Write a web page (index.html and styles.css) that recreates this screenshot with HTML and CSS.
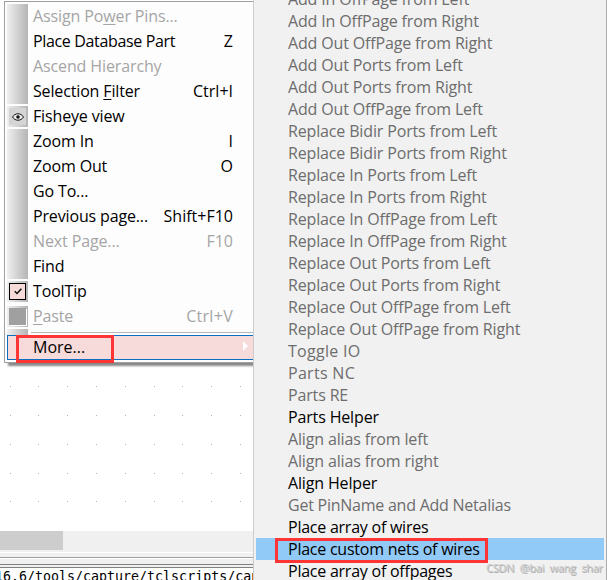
FILE: index.html
```html
<!DOCTYPE html>
<html lang="en">
<head>
<meta charset="utf-8">
<title>Schematic context menu</title>
<link rel="stylesheet" href="styles.css">
</head>
<body>
<div class="app">
  <main class="workspace">
    <div class="canvas">
      <svg class="grid" width="253" height="531" fill="#b4b4b4">
        <defs><path id="dots" d="M10 0h1v1h-1zM38 0h1v1h-1zM67 0h1v1h-1zM96 0h1v1h-1zM125 0h1v1h-1zM154 0h1v1h-1zM182 0h1v1h-1zM211 0h1v1h-1zM240 0h1v1h-1z"/></defs>
        <use href="#dots" y="386"/><use href="#dots" y="415"/><use href="#dots" y="444"/><use href="#dots" y="473"/><use href="#dots" y="501"/>
      </svg>
    </div>
    <div class="scrollbar"><div class="thumb"></div></div>
    <div class="splitter"></div>
    <div class="console"><span>16.6/tools/capture/tclscripts/cap</span></div>
    <nav class="menu">
      <div class="row off"><i class="gut"></i><span class="lbl">Assign Po<u>w</u>er Pins...</span></div>
      <div class="row"><i class="gut"></i><span class="lbl tight">Place Database Part</span><span class="key">Z</span></div>
      <div class="row off"><i class="gut"></i><span class="lbl">Ascend Hierarchy</span></div>
      <div class="row"><i class="gut"></i><span class="lbl">Selection <u>F</u>ilter</span><span class="key">Ctrl+I</span></div>
      <div class="row"><i class="gut mark"><b class="eye"><svg width="12" height="8" viewBox="0 0 12 8"><path d="M.5 4C3-.3 9-.3 11.5 4C9 8.300 3 8.300.5 4z" fill="#eee" stroke="#111"/><circle cx="6" cy="4" r="1.800" fill="#111"/></svg></b></i><span class="lbl">Fisheye view</span></div>
      <div class="row"><i class="gut"></i><span class="lbl">Zoom In</span><span class="key">I</span></div>
      <div class="row"><i class="gut"></i><span class="lbl">Zoom Out</span><span class="key">O</span></div>
      <div class="row"><i class="gut"></i><span class="lbl">Go To...</span></div>
      <div class="row"><i class="gut"></i><span class="lbl">Previous page...</span><span class="key">Shift+F10</span></div>
      <div class="row off"><i class="gut"></i><span class="lbl">Next Page...</span><span class="key">F10</span></div>
      <div class="row"><i class="gut"></i><span class="lbl">Find</span></div>
      <div class="row"><i class="gut mark"><b class="check"><svg width="8" height="7" viewBox="0 0 8 7"><path d="M.7 3.300L3 5.500L7.400.8" fill="none" stroke="#111" stroke-width="1.500"/></svg></b></i><span class="lbl">ToolTip</span></div>
      <div class="row off"><i class="gut mark"><b class="blank"></b></i><span class="lbl"><u>P</u>aste</span><span class="key wide">Ctrl+V</span></div>
      <div class="sep"><i class="gut"></i><hr></div>
      <div class="more"><span class="lbl">More...</span><svg width="5" height="10" viewBox="0 0 5 10"><path d="M0 0L5 5L0 10z" fill="#fff"/></svg></div>
    </nav>
    <div class="callout more-box"></div>
  </main>
  <aside class="submenu">
    <ul>
      <li class="off">Add In OffPage from Left</li>
      <li class="off">Add In OffPage from Right</li>
      <li class="off">Add Out OffPage from Right</li>
      <li class="off">Add Out Ports from Left</li>
      <li class="off">Add Out Ports from Right</li>
      <li class="off">Add Out OffPage from Left</li>
      <li class="off">Replace Bidir Ports from Left</li>
      <li class="off">Replace Bidir Ports from Right</li>
      <li class="off">Replace In Ports from Left</li>
      <li class="off">Replace In Ports from Right</li>
      <li class="off">Replace In OffPage from Left</li>
      <li class="off">Replace In OffPage from Right</li>
      <li class="off">Replace Out Ports from Left</li>
      <li class="off">Replace Out Ports from Right</li>
      <li class="off">Replace Out OffPage from Left</li>
      <li class="off">Replace Out OffPage from Right</li>
      <li class="off wide">Toggle IO</li>
      <li class="off wide">Parts NC</li>
      <li class="off">Parts RE</li>
      <li>Parts Helper</li>
      <li class="off">Align alias from left</li>
      <li class="off">Align alias from right</li>
      <li>Align Helper</li>
      <li class="off tail">Get PinName and Add Netalias</li>
      <li class="tail">Place array of wires</li>
      <li class="sel tail">Place custom nets of wires</li>
      <li class="tail">Place array of offpages</li>
    </ul>
    <div class="callout nets-box"></div>
    <div class="watermark">CSDN @bai wang shar</div>
  </aside>
</div>
</body>
</html>
```
FILE: styles.css
```css
* { box-sizing: border-box; }
body { margin: 0; }
.app {
  display: grid;
  grid-template-columns: 253px 354px;
  width: 607px;
  height: 580px;
  overflow: hidden;
  font: 16px/22px "Open Sans", "Noto Sans", sans-serif;
  letter-spacing: -0.15px;
  color: #000;
  font-variant-ligatures: none;
}
.workspace { position: relative; display: flex; flex-direction: column; overflow: hidden; background: #f0f0f0; }
.canvas { height: 531px; background: #fff; }
.grid { display: block; }
.scrollbar { height: 21px; background: #f0f0f0; }
.thumb { width: 63px; height: 19px; background: #cdcdcd; }
.splitter { height: 15px; border-top: 1px solid #fff; background: linear-gradient(#f0f0f0 4px, #a0a0a0 4px, #a0a0a0 5px, #fff 5px, #fff 6px, #f0f0f0 6px, #f0f0f0 11px, #808080 11px, #808080 12px, #f0f0f0 12px); }
.console { flex: 1; overflow: hidden; border-top: 1px solid #808080; background: #fff; font: 13.3px/16px "DejaVu Sans Mono", monospace; letter-spacing: 0; white-space: nowrap; }
.console span { display: block; margin: 1px 0 0 -5px; }

.menu { position: absolute; left: 4px; top: 1px; width: 260px; height: 362px; padding: 2px; border: 1px solid #a0a0a0; background: #fdfdfd; box-shadow: 4px 3px 2px #888; }
.row { display: flex; align-items: center; height: 25px; }
.gut { display: flex; align-items: center; justify-content: center; flex: none; width: 21px; height: 100%; background: linear-gradient(90deg, #efefef, #b5b5b5); }
.mark { height: 21px; }
.lbl { margin: 0 0 1px 5px; white-space: nowrap; }
.tight { letter-spacing: -0.35px; }
.key { margin: 0 28px 1px auto; letter-spacing: 0; white-space: nowrap; }
.wide { letter-spacing: 0.3px; }
.row.off { color: #a5a5a5; }
.row.off .lbl { letter-spacing: -0.12px; }
u { text-underline-offset: 2px; text-decoration-thickness: 1px; text-decoration-skip-ink: none; }
.eye, .check, .blank { display: flex; align-items: center; justify-content: center; width: 17px; height: 17px; }
.eye { background: #d5d5d5; }
.check { border: 1px solid #000; background: #f7dada; }
.blank { background: #a0a0a0; box-shadow: 1px 1px #fff; }
.sep { display: flex; align-items: center; height: 6px; }
.sep hr { flex: 1; height: 1px; margin: 0 0 0 3px; border: 0; background: #b4b8bb; }
.more { display: flex; align-items: center; height: 25px; border: 1px solid #0a6fc2; background: #f7dada; }
.more .lbl { margin-left: 25px; letter-spacing: 0; }
.more svg { margin: 0 12px 4px auto; }
.callout { position: absolute; border: 3px solid #ff3535; }
.more-box { left: 16px; top: 335px; width: 98px; height: 28px; }

.submenu { position: relative; overflow: hidden; border-left: 1px solid #ccc; border-right: 1px solid #aaa; background: #f1f1f1; }
.submenu ul { margin: -12px 2px 0 2px; padding: 0; list-style: none; }
.submenu li { height: 22px; padding-left: 32px; white-space: nowrap; }
.submenu .off { color: #6d6d6d; }
.submenu .sel { background: #91c9f7; }
.submenu .tail { letter-spacing: -0.24px; }
.nets-box { left: 21px; top: 538px; width: 213px; height: 25px; }
.watermark { position: absolute; left: 232px; top: 560px; font-size: 11px; line-height: 16px; letter-spacing: -0.3px; word-spacing: 3px; color: #ccc; white-space: nowrap; text-shadow: 1px 1px #aaa; }
```
